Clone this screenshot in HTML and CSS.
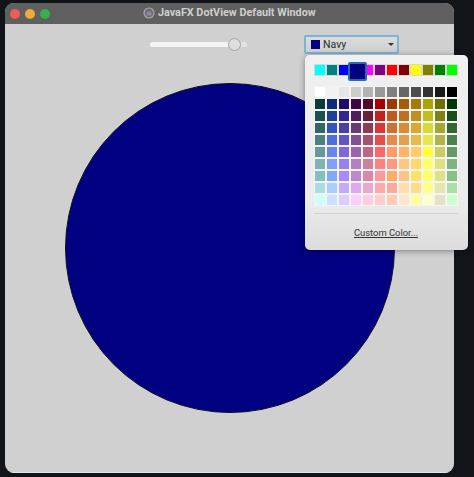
FILE: index.html
```html
<!DOCTYPE html>
<html lang="en">
<head>
    <meta charset="UTF-8">
    <title>JavaFX DotView Default Window</title>
    <link rel="stylesheet" href="styles.css">
</head>
<body>
    <div class="window">
        <div class="titlebar">
            <div class="lights">
                <span class="light red"></span>
                <span class="light yellow"></span>
                <span class="light green"></span>
            </div>
            <div class="title">
                <svg class="title-icon" width="12" height="12" viewBox="0 0 12 12">
                    <circle cx="6" cy="6" r="5" fill="#6f6a78" stroke="#a9a6b0" stroke-width="1.2"/>
                    <path d="M3.5 5.5a3 3 0 0 1 5 0v3h-5z" fill="#8d8996"/>
                </svg>
                <span>JavaFX DotView Default Window</span>
            </div>
        </div>
        <div class="stage">
            <div class="toolbar">
                <div class="slider">
                    <div class="slider-fill"></div>
                    <div class="slider-thumb"></div>
                </div>
                <div class="picker">
                    <span class="picker-swatch"></span>
                    <span class="picker-label">Navy</span>
                    <span class="picker-arrow"></span>
                </div>
            </div>
            <div class="dot"></div>
        </div>
    </div>

    <div class="popup">
        <div class="swatches" id="topRow"></div>
        <div class="swatches grays" id="grayRow"></div>
        <div class="swatches" id="grid"></div>
        <div class="separator"></div>
        <div class="custom">Custom Color...</div>
    </div>

    <script src="script.js"></script>
</body>
</html>
```

FILE: styles.css
```css
html, body {
    height: 100%;
}

body {
    margin: 0;
    padding: 3px 0 0 5px;
    box-sizing: border-box;
    background-color: #11151a;
    font-family: Roboto, "Liberation Sans", sans-serif;
    overflow: hidden;
}

.window {
    width: 449px;
    height: 470px;
    border-radius: 9px;
    overflow: hidden;
    display: flex;
    flex-direction: column;
    background-color: #d0d0d0;
}

.titlebar {
    height: 21px;
    flex: none;
    display: flex;
    align-items: center;
    position: relative;
    background-color: #5f5f5f;
}

.lights {
    display: flex;
    gap: 5px;
    padding-left: 5px;
}

.light {
    width: 10px;
    height: 10px;
    border-radius: 50%;
}

.red { background-color: #ee5c56; }
.yellow { background-color: #eeaa3c; }
.green { background-color: #35b04a; }

.title {
    position: absolute;
    left: 138px;
    top: 3px;
    display: flex;
    align-items: center;
    gap: 3px;
    color: #cfcfcf;
    font-size: 10.8px;
    font-weight: bold;
    line-height: 14px;
    white-space: nowrap;
}

.stage {
    flex: 1;
    display: flex;
    flex-direction: column;
    box-shadow: inset 0 -1px 0 #e6e6e6;
}

.toolbar {
    height: 59px;
    flex: none;
    display: flex;
    align-items: flex-start;
    padding: 11px 0 0 145px;
    box-sizing: border-box;
}

.slider {
    width: 97px;
    height: 5px;
    margin-top: 7px;
    background-color: #e3e3e3;
    border-radius: 3px;
    position: relative;
}

.slider-fill {
    width: 84px;
    height: 5px;
    border-radius: 3px;
    background-color: #f4f4f4;
}

.slider-thumb {
    position: absolute;
    left: 78px;
    top: -4px;
    width: 11px;
    height: 11px;
    border-radius: 50%;
    background-color: #dedede;
    border: 1px solid #a3a3a3;
}

.picker {
    width: 86px;
    height: 15px;
    margin-left: 57px;
    padding: 0 0 0 5px;
    border: 2px solid #7ab5d6;
    border-radius: 2px;
    background: linear-gradient(#dcdcdc, #cfcfcf);
    display: flex;
    align-items: center;
    color: #2b2b2b;
    font-size: 10.5px;
}

.picker-swatch {
    width: 9px;
    height: 9px;
    background-color: #000080;
    margin-right: 3px;
}

.picker-label {
    flex: 1;
}

.picker-arrow {
    width: 0;
    height: 0;
    margin-right: 3px;
    border-left: 3px solid transparent;
    border-right: 3px solid transparent;
    border-top: 3px solid #333333;
}

.dot {
    width: 328px;
    height: 328px;
    margin-left: 60px;
    border-radius: 50%;
    background-color: #000080;
    border: 1px solid #111122;
}

.popup {
    position: absolute;
    left: 305px;
    top: 55px;
    width: 163px;
    height: 195px;
    padding: 9px 10px 0 9px;
    box-sizing: border-box;
    border-radius: 5px;
    background: linear-gradient(#f0f0f0 0, #ececec 75%, #dcdcdc 100%);
    box-shadow: 0 1px 6px rgba(0, 0, 0, 0.4);
    display: flex;
    flex-direction: column;
}

.swatches {
    display: grid;
    grid-template-columns: repeat(12, 12px);
    width: 144px;
}

.swatch {
    height: 12px;
    border: 0.5px solid #f4f4f4;
    box-sizing: border-box;
}

#topRow .swatch {
    border-color: #d8d8d8;
}

.grays {
    margin-top: 10px;
}

.selected {
    position: relative;
}

.selected::after {
    content: "";
    position: absolute;
    left: -3px;
    top: -3px;
    width: 15px;
    height: 15px;
    background-color: #000080;
    border: 2px solid #1f6fb0;
    border-radius: 2px;
}

.separator {
    height: 1px;
    margin-top: 7px;
    background-color: #d2d2d2;
}

.custom {
    margin-top: 13px;
    text-align: center;
    color: #333333;
    font-size: 9.4px;
    line-height: 12px;
    text-decoration: underline;
}
```

FILE: script.js
```js
const topRow = ['#00ffff', '#008080', '#0000ff', '#000080', '#ff00ff', '#800080', '#ff0000', '#800000', '#ffff00', '#808000', '#008000', '#00ff00'];

const grayRow = ['#ffffff', '#f2f2f2', '#e6e6e6', '#cccccc', '#b3b3b3', '#999999', '#808080', '#666666', '#4d4d4d', '#333333', '#1a1a1a', '#000000'];

const gridRows = [
    ['#0a3a3a', '#0b2a80', '#1f0a70', '#3a0a45', '#500a25', '#a80000', '#9a3a05', '#a85a05', '#a87a05', '#a8a505', '#6f6f05', '#053505'],
    ['#1a5050', '#1f3f99', '#33248f', '#4f1f5c', '#6f1f38', '#c21f1f', '#bf5a1f', '#bf6f1f', '#bf8f1f', '#bfbf1f', '#808019', '#1a4d1a'],
    ['#336666', '#3355bb', '#4d3da6', '#663d73', '#8c3d52', '#d93636', '#cc7033', '#d98c33', '#d9a833', '#d9d933', '#a6a633', '#336633'],
    ['#4d8080', '#4d6fd9', '#6652c7', '#805290', '#a6526f', '#e64d4d', '#e68a4d', '#e6a04d', '#e6bc4d', '#e6e64d', '#b3b34d', '#4d804d'],
    ['#669999', '#6685f2', '#7f66e0', '#9966a6', '#bf6685', '#ff6666', '#ff9966', '#ffb366', '#ffcc66', '#ffff33', '#cccc66', '#669966'],
    ['#80b3b3', '#809fff', '#9980f2', '#b380bf', '#cc8099', '#ff8080', '#ff9980', '#ffc680', '#ffd966', '#ffff66', '#e0e080', '#80b380'],
    ['#80c0c0', '#80aaff', '#aa88ff', '#c088cc', '#d988aa', '#ff9999', '#ffaa66', '#ffc388', '#ffe066', '#ffff66', '#e0e088', '#88c088'],
    ['#aadddd', '#aaccff', '#c4aaff', '#ddaaee', '#e6aacc', '#ffaaaa', '#ffaa99', '#ffddaa', '#ffdd88', '#ffff88', '#e6e6aa', '#aaddaa'],
    ['#ccffff', '#cce0ff', '#ddccff', '#ffccff', '#ffcce0', '#ffcccc', '#ffccb3', '#ffe6cc', '#ffff99', '#ffffcc', '#e6e0c4', '#ccffcc']
];

function addSwatches(containerId, colors) {
    const container = document.getElementById(containerId);
    colors.forEach(color => {
        const swatch = document.createElement('div');
        swatch.className = 'swatch';
        swatch.style.backgroundColor = color;
        if (containerId === 'topRow' && color === '#000080') {
            swatch.classList.add('selected');
        }
        container.appendChild(swatch);
    });
}

addSwatches('topRow', topRow);
addSwatches('grayRow', grayRow);
addSwatches('grid', gridRows.flat());
```
